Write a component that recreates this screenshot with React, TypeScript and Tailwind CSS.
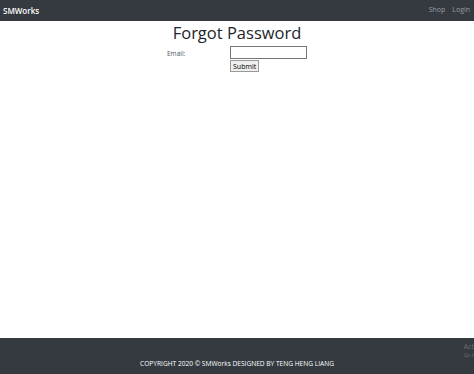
import React from "react";

export default function App() {
  return (
    <div className="flex min-h-[374px] flex-col bg-white font-['Open_Sans','Noto_Sans',sans-serif]">
      {/* Navbar */}
      <nav className="flex h-[21px] items-center justify-between bg-[#343a40] pl-[3px] pr-[4px]">
        <span className="text-[8px] font-semibold text-white">SMWorks</span>
        <div className="flex gap-[7px] text-[7px] text-[#9a9da0]">
          <span>Shop</span>
          <span>Login</span>
        </div>
      </nav>

      {/* Content */}
      <main className="flex flex-1 flex-col items-center">
        <h1 className="mt-[1px] text-[16.5px] leading-[22px] font-medium text-[#212529]">Forgot Password</h1>
        <form className="mt-[2px] flex w-full pl-[167px]">
          <label className="mt-[3px] w-[63px] text-[6.5px] text-[#495057]">Email:</label>
          <div className="flex flex-col items-start gap-[1px]">
            <input
              type="text"
              className="h-[13px] w-[77px] border border-[#767676] bg-white"
            />
            <button
              type="button"
              className="h-[12px] border border-[#9a9a9a] bg-[#efefef] px-[2px] text-[7px] leading-none text-black"
            >
              Submit
            </button>
          </div>
        </form>
      </main>

      {/* Footer */}
      <footer className="relative h-[36px] bg-[#343a40]">
        <div className="flex h-full items-end justify-center pb-[5px]">
          <span className="text-[6.6px] text-white">
            COPYRIGHT 2020 © SMWorks DESIGNED BY TENG HENG LIANG
          </span>
        </div>
        <div className="absolute right-0 top-[4px] text-[7px] leading-[9px] text-[#6c7176]">
          <div>Act</div>
          <div className="text-[5px]">Go t</div>
        </div>
      </footer>
    </div>
  );
}
